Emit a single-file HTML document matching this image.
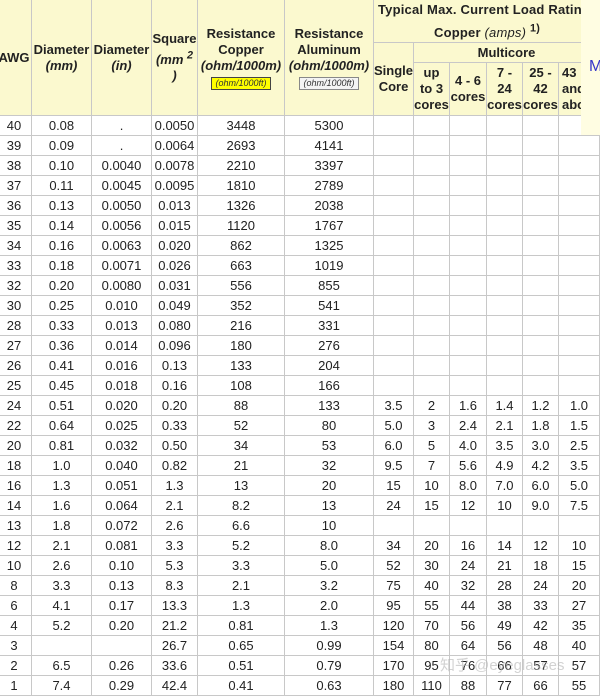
<!DOCTYPE html>
<html><head><meta charset="utf-8"><style>
body{margin:0;width:600px;height:695px;overflow:hidden;background:#fff;position:relative;font-family:"Liberation Sans","DejaVu Sans",sans-serif;}
table{position:absolute;left:-4px;top:-1px;border-collapse:collapse;table-layout:fixed;width:603px;}
td,th{border:1px solid #c8c8c8;padding:0;text-align:center;font-size:13px;color:#222;overflow:hidden;white-space:nowrap;}
th{background:#fbf9cf;font-weight:bold;line-height:16px;white-space:nowrap;}
th i{font-weight:bold;}
tbody td{height:19px;line-height:19px;}
.y{display:inline-block;background:#ffff00;border:1px solid #444;font-size:9px;font-style:italic;font-weight:normal;line-height:11px;padding:0 3px;color:#333;}
.w{display:inline-block;background:#f4f4f4;border:1px solid #888;font-size:9px;font-style:italic;font-weight:normal;line-height:11px;padding:0 3px;color:#333;}
.ov{position:absolute;left:581px;top:0;width:19px;height:135px;background:#fffde2;}
.ov span{position:absolute;left:8px;top:58px;color:#3535c8;font-size:16px;}
.wm{position:absolute;left:440px;top:654px;color:rgba(180,180,180,.6);font-size:15px;}
</style></head><body>
<table>
<colgroup><col style="width:35px"><col style="width:60px"><col style="width:60px"><col style="width:46px"><col style="width:87px"><col style="width:89px"><col style="width:40px"><col style="width:36px"><col style="width:37px"><col style="width:36px"><col style="width:36px"><col style="width:41px"></colgroup>
<thead>
<tr style="height:43px"><th rowspan="3">AWG</th><th rowspan="3">Diameter<br><i>(mm)</i></th><th rowspan="3">Diameter<br><i>(in)</i></th><th rowspan="3">Square<br><i>(mm <sup>2</sup></i><br><i>)</i></th><th rowspan="3">Resistance<br>Copper<br><i>(ohm/1000m)</i><br><span class="y">(ohm/1000ft)</span></th><th rowspan="3">Resistance<br>Aluminum<br><i>(ohm/1000m)</i><br><span class="w">(ohm/1000ft)</span></th><th colspan="6" style="text-align:left;padding-left:4px;line-height:19px;letter-spacing:0.2px">Typical Max. Current Load Ratings<br><span style="padding-left:56px">Copper <i style="font-weight:normal">(amps)</i> <sup>1)</sup></span></th></tr>
<tr style="height:20px"><th rowspan="2">Single<br>Core</th><th colspan="5">Multicore</th></tr>
<tr style="height:53px"><th>up<br>to 3<br>cores</th><th>4 - 6<br>cores</th><th>7 -<br>24<br>cores</th><th>25 -<br>42<br>cores</th><th style="text-align:left;padding-left:3px">43<br>and<br>above</th></tr>
</thead>
<tbody>
<tr><td>40</td><td>0.08</td><td>.</td><td>0.0050</td><td>3448</td><td>5300</td><td></td><td></td><td></td><td></td><td></td><td></td></tr>
<tr><td>39</td><td>0.09</td><td>.</td><td>0.0064</td><td>2693</td><td>4141</td><td></td><td></td><td></td><td></td><td></td><td></td></tr>
<tr><td>38</td><td>0.10</td><td>0.0040</td><td>0.0078</td><td>2210</td><td>3397</td><td></td><td></td><td></td><td></td><td></td><td></td></tr>
<tr><td>37</td><td>0.11</td><td>0.0045</td><td>0.0095</td><td>1810</td><td>2789</td><td></td><td></td><td></td><td></td><td></td><td></td></tr>
<tr><td>36</td><td>0.13</td><td>0.0050</td><td>0.013</td><td>1326</td><td>2038</td><td></td><td></td><td></td><td></td><td></td><td></td></tr>
<tr><td>35</td><td>0.14</td><td>0.0056</td><td>0.015</td><td>1120</td><td>1767</td><td></td><td></td><td></td><td></td><td></td><td></td></tr>
<tr><td>34</td><td>0.16</td><td>0.0063</td><td>0.020</td><td>862</td><td>1325</td><td></td><td></td><td></td><td></td><td></td><td></td></tr>
<tr><td>33</td><td>0.18</td><td>0.0071</td><td>0.026</td><td>663</td><td>1019</td><td></td><td></td><td></td><td></td><td></td><td></td></tr>
<tr><td>32</td><td>0.20</td><td>0.0080</td><td>0.031</td><td>556</td><td>855</td><td></td><td></td><td></td><td></td><td></td><td></td></tr>
<tr><td>30</td><td>0.25</td><td>0.010</td><td>0.049</td><td>352</td><td>541</td><td></td><td></td><td></td><td></td><td></td><td></td></tr>
<tr><td>28</td><td>0.33</td><td>0.013</td><td>0.080</td><td>216</td><td>331</td><td></td><td></td><td></td><td></td><td></td><td></td></tr>
<tr><td>27</td><td>0.36</td><td>0.014</td><td>0.096</td><td>180</td><td>276</td><td></td><td></td><td></td><td></td><td></td><td></td></tr>
<tr><td>26</td><td>0.41</td><td>0.016</td><td>0.13</td><td>133</td><td>204</td><td></td><td></td><td></td><td></td><td></td><td></td></tr>
<tr><td>25</td><td>0.45</td><td>0.018</td><td>0.16</td><td>108</td><td>166</td><td></td><td></td><td></td><td></td><td></td><td></td></tr>
<tr><td>24</td><td>0.51</td><td>0.020</td><td>0.20</td><td>88</td><td>133</td><td>3.5</td><td>2</td><td>1.6</td><td>1.4</td><td>1.2</td><td>1.0</td></tr>
<tr><td>22</td><td>0.64</td><td>0.025</td><td>0.33</td><td>52</td><td>80</td><td>5.0</td><td>3</td><td>2.4</td><td>2.1</td><td>1.8</td><td>1.5</td></tr>
<tr><td>20</td><td>0.81</td><td>0.032</td><td>0.50</td><td>34</td><td>53</td><td>6.0</td><td>5</td><td>4.0</td><td>3.5</td><td>3.0</td><td>2.5</td></tr>
<tr><td>18</td><td>1.0</td><td>0.040</td><td>0.82</td><td>21</td><td>32</td><td>9.5</td><td>7</td><td>5.6</td><td>4.9</td><td>4.2</td><td>3.5</td></tr>
<tr><td>16</td><td>1.3</td><td>0.051</td><td>1.3</td><td>13</td><td>20</td><td>15</td><td>10</td><td>8.0</td><td>7.0</td><td>6.0</td><td>5.0</td></tr>
<tr><td>14</td><td>1.6</td><td>0.064</td><td>2.1</td><td>8.2</td><td>13</td><td>24</td><td>15</td><td>12</td><td>10</td><td>9.0</td><td>7.5</td></tr>
<tr><td>13</td><td>1.8</td><td>0.072</td><td>2.6</td><td>6.6</td><td>10</td><td></td><td></td><td></td><td></td><td></td><td></td></tr>
<tr><td>12</td><td>2.1</td><td>0.081</td><td>3.3</td><td>5.2</td><td>8.0</td><td>34</td><td>20</td><td>16</td><td>14</td><td>12</td><td>10</td></tr>
<tr><td>10</td><td>2.6</td><td>0.10</td><td>5.3</td><td>3.3</td><td>5.0</td><td>52</td><td>30</td><td>24</td><td>21</td><td>18</td><td>15</td></tr>
<tr><td>8</td><td>3.3</td><td>0.13</td><td>8.3</td><td>2.1</td><td>3.2</td><td>75</td><td>40</td><td>32</td><td>28</td><td>24</td><td>20</td></tr>
<tr><td>6</td><td>4.1</td><td>0.17</td><td>13.3</td><td>1.3</td><td>2.0</td><td>95</td><td>55</td><td>44</td><td>38</td><td>33</td><td>27</td></tr>
<tr><td>4</td><td>5.2</td><td>0.20</td><td>21.2</td><td>0.81</td><td>1.3</td><td>120</td><td>70</td><td>56</td><td>49</td><td>42</td><td>35</td></tr>
<tr><td>3</td><td></td><td></td><td>26.7</td><td>0.65</td><td>0.99</td><td>154</td><td>80</td><td>64</td><td>56</td><td>48</td><td>40</td></tr>
<tr><td>2</td><td>6.5</td><td>0.26</td><td>33.6</td><td>0.51</td><td>0.79</td><td>170</td><td>95</td><td>76</td><td>66</td><td>57</td><td>57</td></tr>
<tr><td>1</td><td>7.4</td><td>0.29</td><td>42.4</td><td>0.41</td><td>0.63</td><td>180</td><td>110</td><td>88</td><td>77</td><td>66</td><td>55</td></tr>
</tbody></table>
<div class="ov"><span>M</span></div>
<div class="wm">知乎 @eyeglasses</div>
</body></html>
